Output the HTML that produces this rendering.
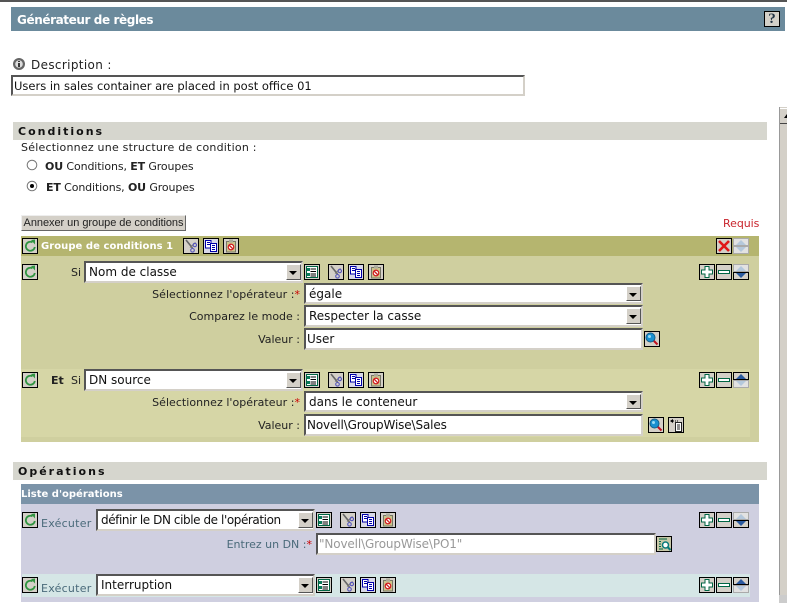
<!DOCTYPE html>
<html lang="fr"><head><meta charset="utf-8"><title>Générateur de règles</title>
<style>
html,body{margin:0;padding:0;background:#fff;width:787px;height:603px;overflow:hidden}
body{position:relative;font-family:"DejaVu Sans","Liberation Sans",sans-serif;font-size:11px;color:#222}
.b,.t,svg.i{position:absolute}
.t{white-space:nowrap;line-height:14px;margin-top:1px}
.r{text-align:right}
.sec{font-weight:bold;letter-spacing:2px;font-size:11px;color:#111}
.inp{position:absolute;box-sizing:border-box;background:#fff;border:2px solid;border-color:#555 #d4d0c8 #d4d0c8 #555;font-size:12px;line-height:17px;padding:1px 0 0 1px;white-space:nowrap;overflow:hidden;color:#111}
.sel{padding-left:3px}
.arr{position:absolute;right:0;top:1px;width:15px;bottom:1px;box-sizing:border-box;background:#d4d0c8;border:1px solid;border-color:#fff #555 #555 #fff}
.arr:after{content:"";position:absolute;left:2px;top:6px;border:4px solid transparent;border-top:4px solid #000;border-bottom:0}
svg.i{width:16px;height:16px;display:block}
</style></head><body>
<svg width="0" height="0" style="position:absolute"><defs>
<symbol id="ref" viewBox="0 0 16 16"><rect x=".5" y=".5" width="15" height="15" fill="#d4d0c8" stroke="#000"/><path d="M10.500 4.300A4.500 4.500 0 1 0 12.800 9" fill="none" stroke="#2f9440" stroke-width="1.800"/><path d="M9 2L13 1.500V6.500Z" fill="#2f9440"/></symbol>
<symbol id="cut" viewBox="0 0 16 16"><rect x=".5" y=".5" width="15" height="15" fill="#d4d0c8" stroke="#000"/><path d="M3 2L9.500 10" stroke="#666" stroke-width="1.600" fill="none"/><path d="M12.500 4.500L7 9.500" stroke="#777" stroke-width="1"/><circle cx="11.800" cy="7" r="1.700" fill="none" stroke="#55b" stroke-width="1.100"/><circle cx="9.500" cy="12.300" r="1.800" fill="none" stroke="#55b" stroke-width="1.100"/></symbol>
<symbol id="cpy" viewBox="0 0 16 16"><rect x=".5" y=".5" width="15" height="15" fill="#d8d8e8" stroke="#000"/><path d="M2.500 2.500H8V10H2.500Z" fill="#fff" stroke="#00a"/><path d="M7.500 5.500H13.500V13.500H7.500Z" fill="#fff" stroke="#00a"/><path d="M4 4.500H7M4 6.500H7M9 7.500H12M9 9.500H12M9 11.500H12" stroke="#00a"/></symbol>
<symbol id="pst" viewBox="0 0 16 16"><rect x=".5" y=".5" width="15" height="15" fill="#d4d0c8" stroke="#000"/><path d="M3.500 3.500H12.500V14H3.500Z" fill="#cdc68a" stroke="#776"/><rect x="6" y="1.500" width="4" height="3" fill="#aa9"/><circle cx="8" cy="9" r="3.500" fill="#fff"/><circle cx="8" cy="9" r="2.800" fill="none" stroke="#d02020" stroke-width="1.300"/><path d="M6 7L10 11" stroke="#d02020" stroke-width="1.300"/></symbol>
<symbol id="lst" viewBox="0 0 16 16"><rect x=".5" y=".5" width="15" height="15" fill="#d4d0c8" stroke="#000"/><path d="M2.500 2.500H13.500V13.500H2.500Z" fill="#fff" stroke="#064"/><path d="M6.500 5H12M6.500 7.500H12M6.500 10H12M6.500 12H12" stroke="#000"/><rect x="3" y="4" width="3" height="3" fill="#0a7a5a"/><rect x="3" y="9" width="3" height="3" fill="#0a7a5a"/></symbol>
<symbol id="add" viewBox="0 0 16 16"><rect x=".5" y=".5" width="15" height="15" fill="#d4d0c8" stroke="#000"/><path d="M6 2.500H10V6H13.500V10H10V13.500H6V10H2.500V6H6Z" fill="#fff" stroke="#064"/></symbol>
<symbol id="min" viewBox="0 0 16 16"><rect x=".5" y=".5" width="15" height="15" fill="#d4d0c8" stroke="#000"/><path d="M2.500 6.500H13.500V9.500H2.500Z" fill="#fff" stroke="#064"/></symbol>
<symbol id="del" viewBox="0 0 16 16"><rect x=".5" y=".5" width="15" height="15" fill="#d4d0c8" stroke="#000"/><path d="M3 3L13 13M13 3L3 13" stroke="#e01818" stroke-width="2.600"/></symbol>
<symbol id="mag" viewBox="0 0 16 16"><rect x=".5" y=".5" width="15" height="15" fill="#d4d0c8" stroke="#000"/><path d="M9 9L13.500 13.500" stroke="#c01020" stroke-width="2"/><circle cx="6.500" cy="6.500" r="4.500" fill="#1a90d0" stroke="#16608a"/><circle cx="5.500" cy="5.500" r="1.500" fill="#9adcf5"/></symbol>
<symbol id="doc" viewBox="0 0 16 16"><rect x=".5" y=".5" width="15" height="15" fill="#d4d0c8" stroke="#000"/><path d="M7.500 5.500H13.500V14.500H7.500Z" fill="#fff" stroke="#222"/><path d="M9 8H12M9 10H12M9 12H12" stroke="#222"/><path d="M2 4L5 2V6Z" fill="#000"/><path d="M5 4H6M7 4H8M9 4H10" stroke="#000"/></symbol>
<symbol id="fnd" viewBox="0 0 16 16"><rect x=".5" y=".5" width="15" height="15" fill="#c8c8a8" stroke="#000"/><path d="M3 3H11M3 5.500H5M3 8H5M3 10.500H5M3 13H7" stroke="#064"/><circle cx="9.500" cy="9" r="3" fill="#fff" stroke="#087a7a" stroke-width="1.500"/><path d="M11.500 11L14.500 14" stroke="#087a7a" stroke-width="2"/></symbol>
<symbol id="upa" viewBox="0 0 16 8"><rect x=".5" y=".5" width="15" height="7" fill="#e2e2e2" stroke="#aaa"/><path d="M3 7L8 2L13 7Z" fill="#b4c8dc"/></symbol>
<symbol id="dna" viewBox="0 0 16 8"><rect x=".5" y=".5" width="15" height="7" fill="#e2e2e2" stroke="#aaa"/><path d="M3 1L8 6L13 1Z" fill="#b4c8dc"/></symbol>
<symbol id="upb" viewBox="0 0 16 8"><rect x=".5" y=".5" width="15" height="7" fill="#d4d0c8" stroke="#000"/><path d="M3 7L8 2L13 7Z" fill="#2a5aa0"/></symbol>
<symbol id="dnb" viewBox="0 0 16 8"><rect x=".5" y=".5" width="15" height="7" fill="#d4d0c8" stroke="#000"/><path d="M3 1L8 6L13 1Z" fill="#2a5aa0"/></symbol>
</defs></svg>

<div class="b" style="left:0;top:0;width:787px;height:2px;background:#555"></div>
<div class="b" style="left:11px;top:7px;width:774px;height:24px;background:#6b8a9c"></div>
<div class="t" style="left:17px;top:12px;color:#fff;font-weight:bold;font-size:12px;letter-spacing:-.4px">Générateur de règles</div>
<div class="b" style="left:764px;top:11px;width:14px;height:14px;border:1px solid #000;background:#d4d0c8;color:#234;font:bold 15px/15px 'Liberation Serif',serif;text-align:center">?</div>

<svg class="i" style="left:13px;top:58px;width:12px;height:12px" viewBox="0 0 12 12"><circle cx="6" cy="6" r="6" fill="#666"/><circle cx="6" cy="6" r="3.800" fill="#ddd"/><path d="M6 3V4M6 5V9" stroke="#000" stroke-width="1.500"/></svg>
<div class="t" style="left:31px;top:57px;font-size:12px;letter-spacing:.35px">Description :</div>
<div class="inp" style="left:11px;top:75px;width:514px;height:21px;font-size:11.500px">Users in sales container are placed in post office 01</div>

<div class="b" style="left:779px;top:107px;width:8px;height:489px;background:#d4d0c8;border-left:1px solid #999;box-sizing:border-box"></div>
<div class="b" style="left:780px;top:108px;width:7px;height:14px;background:#d4d0c8;border-top:1px solid #fff;border-bottom:1px solid #444"></div>
<div class="b" style="left:784px;top:114px;border:3px solid transparent;border-bottom:4px solid #000;border-top:0"></div>
<div class="b" style="left:779px;top:595px;width:8px;height:8px;background:#ccc"></div>

<div class="b" style="left:13px;top:122px;width:754px;height:18px;background:#d6d6ce"></div>
<div class="t sec" style="left:18px;top:124px">Conditions</div>
<div class="t" style="left:21px;top:140px;letter-spacing:.22px">Sélectionnez une structure de condition :</div>

<svg class="i" style="left:26px;top:159px;width:12px;height:12px" viewBox="0 0 12 12"><circle cx="6" cy="6" r="4.800" fill="#fff" stroke="#777"/></svg>
<div class="t" style="left:45px;top:159px;letter-spacing:-.12px"><b>OU</b> Conditions, <b>ET</b> Groupes</div>
<svg class="i" style="left:26px;top:180px;width:12px;height:12px" viewBox="0 0 12 12"><circle cx="6" cy="6" r="4.800" fill="#fff" stroke="#777"/><circle cx="6" cy="6" r="2" fill="#000"/></svg>
<div class="t" style="left:46px;top:180px;letter-spacing:-.12px"><b>ET</b> Conditions, <b>OU</b> Groupes</div>

<div class="b" style="left:21px;top:215px;width:165px;height:16px;box-sizing:border-box;background:#d4d0c8;border:1px solid;border-color:#eee #666 #666 #eee;text-align:center;font-family:'Liberation Sans',sans-serif;font-size:11px;letter-spacing:-.05px;line-height:15px;white-space:nowrap;color:#222">Annexer un groupe de conditions</div>
<div class="t" style="left:723px;top:216px;color:#c8242c;letter-spacing:-.05px">Requis</div>

<div class="b" style="left:21px;top:236px;width:738px;height:20px;background:#b5b56f"></div>
<div class="b" style="left:21px;top:256px;width:738px;height:186px;background:#cfcf9f"></div>
<div class="b" style="left:21px;top:369px;width:729px;height:68px;background:#d6d6a6"></div>

<svg class="i" style="left:22px;top:238px"><use href="#ref"/></svg>
<div class="t" style="left:41px;top:239px;color:#fff;font-weight:bold;font-size:10px;letter-spacing:.05px">Groupe de conditions 1</div>
<svg class="i" style="left:183px;top:238px"><use href="#cut"/></svg>
<svg class="i" style="left:203px;top:238px"><use href="#cpy"/></svg>
<svg class="i" style="left:223px;top:238px"><use href="#pst"/></svg>
<svg class="i" style="left:716px;top:238px"><use href="#del"/></svg>
<svg class="i" style="left:733px;top:238px;height:8px"><use href="#upa"/></svg>
<svg class="i" style="left:733px;top:246px;height:8px"><use href="#dna"/></svg>

<svg class="i" style="left:22px;top:264px"><use href="#ref"/></svg>
<div class="t" style="left:71px;top:265px">Si</div>
<div class="inp sel" style="left:84px;top:261px;width:219px;height:22px">Nom de classe<span class="arr"></span></div>
<svg class="i" style="left:304px;top:264px"><use href="#lst"/></svg>
<svg class="i" style="left:328px;top:264px"><use href="#cut"/></svg>
<svg class="i" style="left:348px;top:264px"><use href="#cpy"/></svg>
<svg class="i" style="left:368px;top:264px"><use href="#pst"/></svg>
<svg class="i" style="left:699px;top:264px"><use href="#add"/></svg>
<svg class="i" style="left:716px;top:264px"><use href="#min"/></svg>
<svg class="i" style="left:733px;top:264px;height:8px"><use href="#upa"/></svg>
<svg class="i" style="left:733px;top:272px;height:8px"><use href="#dnb"/></svg>

<div class="t r" style="right:487px;top:287px;letter-spacing:.04px">Sélectionnez l'opérateur :<span style="color:#c00">*</span></div>
<div class="inp sel" style="left:304px;top:283px;width:339px;height:21px">égale<span class="arr"></span></div>
<div class="t r" style="right:487px;top:309px">Comparez le mode :</div>
<div class="inp sel" style="left:304px;top:305px;width:339px;height:22px">Respecter la casse<span class="arr"></span></div>
<div class="t r" style="right:487px;top:332px">Valeur :</div>
<div class="inp" style="left:304px;top:328px;width:339px;height:22px">User</div>
<svg class="i" style="left:644px;top:331px"><use href="#mag"/></svg>

<svg class="i" style="left:22px;top:372px"><use href="#ref"/></svg>
<div class="t" style="left:51px;top:373px;font-weight:bold">Et</div>
<div class="t" style="left:71px;top:373px">Si</div>
<div class="inp sel" style="left:84px;top:369px;width:219px;height:22px">DN source<span class="arr"></span></div>
<svg class="i" style="left:304px;top:372px"><use href="#lst"/></svg>
<svg class="i" style="left:328px;top:372px"><use href="#cut"/></svg>
<svg class="i" style="left:348px;top:372px"><use href="#cpy"/></svg>
<svg class="i" style="left:368px;top:372px"><use href="#pst"/></svg>
<svg class="i" style="left:699px;top:372px"><use href="#add"/></svg>
<svg class="i" style="left:716px;top:372px"><use href="#min"/></svg>
<svg class="i" style="left:733px;top:372px;height:8px"><use href="#upb"/></svg>
<svg class="i" style="left:733px;top:380px;height:8px"><use href="#dna"/></svg>

<div class="t r" style="right:487px;top:395px;letter-spacing:.04px">Sélectionnez l'opérateur :<span style="color:#c00">*</span></div>
<div class="inp sel" style="left:304px;top:391px;width:339px;height:21px">dans le conteneur<span class="arr"></span></div>
<div class="t r" style="right:487px;top:418px">Valeur :</div>
<div class="inp" style="left:304px;top:414px;width:339px;height:22px;letter-spacing:-.13px">Novell\GroupWise\Sales</div>
<svg class="i" style="left:648px;top:417px"><use href="#mag"/></svg>
<svg class="i" style="left:668px;top:417px"><use href="#doc"/></svg>

<div class="b" style="left:13px;top:462px;width:754px;height:18px;background:#d6d6ce"></div>
<div class="t sec" style="left:18px;top:464px">Opérations</div>

<div class="b" style="left:21px;top:484px;width:738px;height:20px;background:#7b93a8"></div>
<div class="t" style="left:21px;top:487px;color:#fff;font-weight:bold;font-size:10px">Liste d'opérations</div>
<div class="b" style="left:21px;top:504px;width:738px;height:98px;background:#cfcfe0"></div>
<div class="b" style="left:22px;top:574px;width:728px;height:23px;background:#d5e6e6"></div>

<svg class="i" style="left:22px;top:512px"><use href="#ref"/></svg>
<div class="t" style="left:41px;top:516px;color:#4a6a7a;letter-spacing:.25px">Exécuter</div>
<div class="inp sel" style="left:96px;top:509px;width:219px;height:22px;letter-spacing:-.42px">définir le DN cible de l'opération<span class="arr"></span></div>
<svg class="i" style="left:316px;top:512px"><use href="#lst"/></svg>
<svg class="i" style="left:340px;top:512px"><use href="#cut"/></svg>
<svg class="i" style="left:360px;top:512px"><use href="#cpy"/></svg>
<svg class="i" style="left:380px;top:512px"><use href="#pst"/></svg>
<svg class="i" style="left:699px;top:512px"><use href="#add"/></svg>
<svg class="i" style="left:716px;top:512px"><use href="#min"/></svg>
<svg class="i" style="left:733px;top:512px;height:8px"><use href="#upa"/></svg>
<svg class="i" style="left:733px;top:520px;height:8px"><use href="#dnb"/></svg>

<div class="t r" style="right:475px;top:537px;color:#4a6a7a">Entrez un DN :<span style="color:#c00">*</span></div>
<div class="inp" style="left:316px;top:533px;width:340px;height:22px;color:#999;letter-spacing:-.13px">"Novell\GroupWise\PO1"</div>
<svg class="i" style="left:656px;top:536px"><use href="#fnd"/></svg>

<svg class="i" style="left:22px;top:577px"><use href="#ref"/></svg>
<div class="t" style="left:41px;top:581px;color:#4a6a7a;letter-spacing:.25px">Exécuter</div>
<div class="inp sel" style="left:96px;top:574px;width:219px;height:22px">Interruption<span class="arr"></span></div>
<svg class="i" style="left:316px;top:577px"><use href="#lst"/></svg>
<svg class="i" style="left:340px;top:577px"><use href="#cut"/></svg>
<svg class="i" style="left:360px;top:577px"><use href="#cpy"/></svg>
<svg class="i" style="left:380px;top:577px"><use href="#pst"/></svg>
<svg class="i" style="left:699px;top:577px"><use href="#add"/></svg>
<svg class="i" style="left:716px;top:577px"><use href="#min"/></svg>
<svg class="i" style="left:733px;top:577px;height:8px"><use href="#upb"/></svg>
<svg class="i" style="left:733px;top:585px;height:8px"><use href="#dna"/></svg>
</body></html>
